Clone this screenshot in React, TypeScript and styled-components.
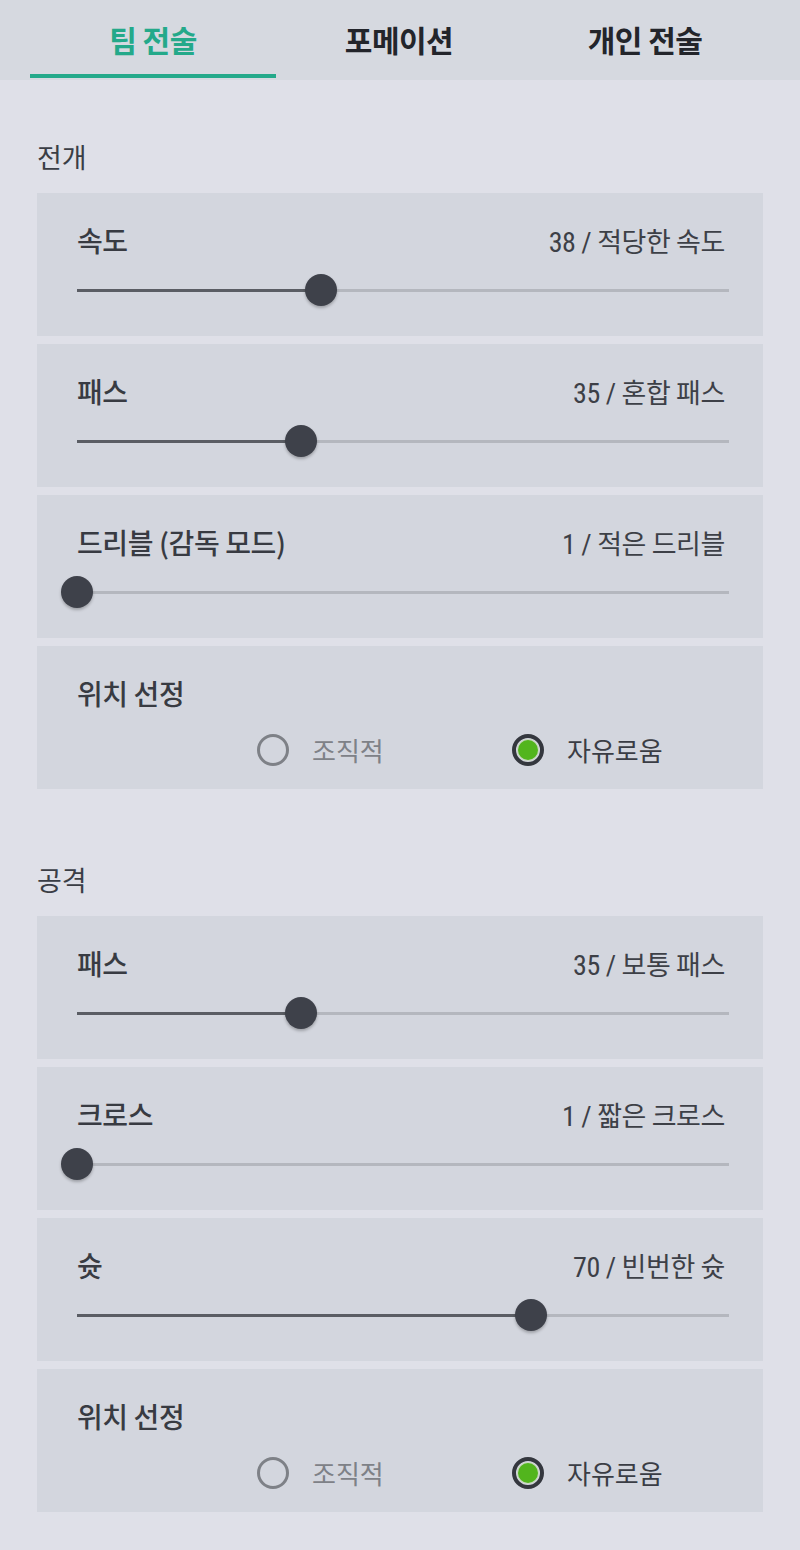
import React from "react";
import styled, { createGlobalStyle } from "styled-components";

const Global = createGlobalStyle`
  html, body { margin: 0; padding: 0; background: #dfe0e8; }
  body { font-family: "Noto Sans CJK KR", "Noto Sans", sans-serif; color: #383b42; }
  * { box-sizing: border-box; }
`;

const Page = styled.div`
  width: 800px;
  min-height: 1550px;
  background: #dfe0e8;
`;

const TabBar = styled.div`
  display: grid;
  grid-template-columns: repeat(3, 246px);
  padding: 0 30px;
  height: 80px;
  background: #d6d9e0;
`;

const Tab = styled.div<{ $active?: boolean }>`
  position: relative;
  display: flex;
  align-items: center;
  justify-content: center;
  padding-bottom: 2px;
  font-size: 30px;
  font-weight: 700;
  letter-spacing: -0.5px;
  color: ${(p) => (p.$active ? "#24a98a" : "#23252b")};
  &::after {
    content: "";
    display: ${(p) => (p.$active ? "block" : "none")};
    position: absolute;
    left: 0;
    right: 0;
    bottom: 2px;
    height: 4px;
    background: #24a98a;
  }
`;

const Content = styled.div`
  padding: 59px 37px 30px 37px;
  display: flex;
  flex-direction: column;
`;

const Section = styled.section`
  display: flex;
  flex-direction: column;
  & + & {
    margin-top: 73px;
  }
`;

const SectionTitle = styled.div<{ $shift?: number }>`
  font-size: 27px;
  line-height: 36px;
  font-weight: 400;
  color: #3a3d45;
  margin-bottom: 18px;
`;

const CardList = styled.div`
  display: flex;
  flex-direction: column;
  gap: 8px;
`;

const Card = styled.div`
  height: 143px;
  background: #d3d6de;
  padding: 30px 34px 0 40px;
  display: flex;
  flex-direction: column;
`;

const Header = styled.div`
  display: flex;
  justify-content: space-between;
  align-items: center;
  height: 34px;
`;

const Label = styled.div`
  font-size: 28px;
  font-weight: 500;
  color: #383b42;
  letter-spacing: -0.4px;
`;

const Value = styled.div`
  font-size: 27px;
  font-weight: 400;
  color: #3d4047;
  margin-right: 4px;
  letter-spacing: -0.4px;
  display: flex;
  align-items: baseline;
`;

const Num = styled.span`
  font-family: "Liberation Sans Narrow", "Roboto Condensed", "Noto Sans CJK KR", sans-serif;
  font-size: 28px;
  letter-spacing: -0.5px;
  margin-right: 6px;
`;

const Track = styled.div`
  position: relative;
  margin-top: 17px;
  height: 32px;
  display: flex;
  align-items: center;
`;

const Fill = styled.div`
  height: 3px;
  background: #5a5d64;
`;

const Rest = styled.div`
  flex: 1;
  height: 3px;
  background: #b4b7be;
`;

const Thumb = styled.div`
  position: absolute;
  top: 0;
  width: 32px;
  height: 32px;
  margin-left: -16px;
  border-radius: 50%;
  background: #3e414a;
  box-shadow: 0 2px 3px rgba(0, 0, 0, 0.25);
`;

const RadioRow = styled.div`
  display: grid;
  grid-template-columns: 255px 255px;
  margin-top: 21px;
  padding-left: 180px;
  height: 32px;
`;

const RadioItem = styled.div`
  display: flex;
  align-items: center;
  gap: 23px;
`;

const RadioCircle = styled.div<{ $checked?: boolean }>`
  width: 32px;
  height: 32px;
  border-radius: 50%;
  border: ${(p) => (p.$checked ? "4px solid #34373e" : "3.5px solid #7e8187")};
  display: flex;
  align-items: center;
  justify-content: center;
  &::after {
    content: "";
    display: ${(p) => (p.$checked ? "block" : "none")};
    width: 20px;
    height: 20px;
    border-radius: 50%;
    background: #52b51d;
    box-shadow: 0 0 0 1px #c9d8c0;
  }
`;

const RadioLabel = styled.span<{ $checked?: boolean }>`
  font-size: 26px;
  color: ${(p) => (p.$checked ? "#3a3d45" : "#7e8187")};
`;

type SliderProps = { label: string; value: number; desc: string };

const SliderCard = ({ label, value, desc }: SliderProps) => {
  const pct = ((value - 1) / 99) * 100;
  return (
    <Card>
      <Header>
        <Label>{label}</Label>
        <Value>
          <Num>{value} /</Num>
          {desc}
        </Value>
      </Header>
      <Track>
        <Fill style={{ width: `${pct}%` }} />
        <Rest />
        <Thumb style={{ left: `${pct}%` }} />
      </Track>
    </Card>
  );
};

const PositionCard = () => (
  <Card>
    <Header>
      <Label>위치 선정</Label>
    </Header>
    <RadioRow>
      <RadioItem>
        <RadioCircle />
        <RadioLabel>조직적</RadioLabel>
      </RadioItem>
      <RadioItem>
        <RadioCircle $checked />
        <RadioLabel $checked>자유로움</RadioLabel>
      </RadioItem>
    </RadioRow>
  </Card>
);

export default function App() {
  return (
    <Page>
      <Global />
      <TabBar>
        <Tab $active>팀 전술</Tab>
        <Tab>포메이션</Tab>
        <Tab>개인 전술</Tab>
      </TabBar>
      <Content>
        <Section>
          <SectionTitle>전개</SectionTitle>
          <CardList>
            <SliderCard label="속도" value={38} desc="적당한 속도" />
            <SliderCard label="패스" value={35} desc="혼합 패스" />
            <SliderCard label="드리블 (감독 모드)" value={1} desc="적은 드리블" />
            <PositionCard />
          </CardList>
        </Section>
        <Section>
          <SectionTitle>공격</SectionTitle>
          <CardList>
            <SliderCard label="패스" value={35} desc="보통 패스" />
            <SliderCard label="크로스" value={1} desc="짧은 크로스" />
            <SliderCard label="슛" value={70} desc="빈번한 슛" />
            <PositionCard />
          </CardList>
        </Section>
      </Content>
    </Page>
  );
}
